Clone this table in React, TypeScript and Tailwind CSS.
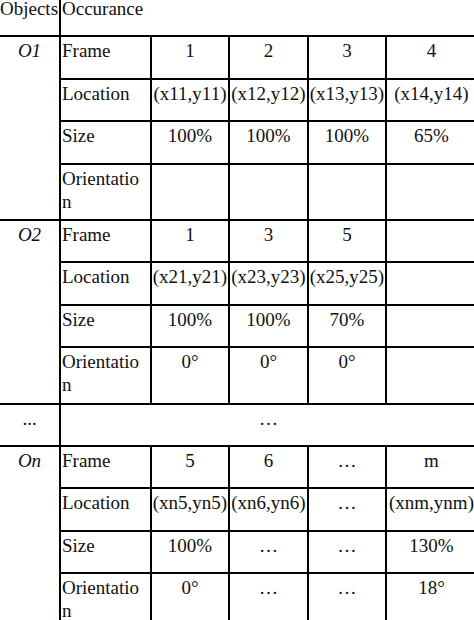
const blocks = [
  {
    name: "O1",
    rows: [
      ["Frame", "1", "2", "3", "4"],
      ["Location", "(x11,y11)", "(x12,y12)", "(x13,y13)", "(x14,y14)"],
      ["Size", "100%", "100%", "100%", "65%"],
      ["Orientation", "", "", "", ""],
    ],
  },
  {
    name: "O2",
    rows: [
      ["Frame", "1", "3", "5", ""],
      ["Location", "(x21,y21)", "(x23,y23)", "(x25,y25)", ""],
      ["Size", "100%", "100%", "70%", ""],
      ["Orientation", "0°", "0°", "0°", ""],
    ],
  },
];

const last = {
  name: "On",
  rows: [
    ["Frame", "5", "6", "…", "m"],
    ["Location", "(xn5,yn5)", "(xn6,yn6)", "…", "(xnm,ynm)"],
    ["Size", "100%", "…", "…", "130%"],
    ["Orientation", "0°", "…", "…", "18°"],
  ],
};

function Label({ text }: { text: string }) {
  // the long label wraps in the source table
  if (text === "Orientation") {
    return (
      <div className="bg-white pl-[1px] pt-[2px]">
        Orientatio
        <br />n
      </div>
    );
  }
  return <div className="bg-white pl-[1px] pt-[2px]">{text}</div>;
}

function Block({ name, rows }: { name: string; rows: string[][] }) {
  return (
    <>
      <div className="row-span-4 bg-white pt-[2px] text-center italic">{name}</div>
      {rows.map((row, i) => (
        <Row key={i} row={row} />
      ))}
    </>
  );
}

function Row({ row }: { row: string[] }) {
  const [label, ...values] = row;
  return (
    <>
      <Label text={label} />
      {values.map((v, j) => (
        <div key={j} className="bg-white pt-[2px] text-center whitespace-nowrap">
          {v}
        </div>
      ))}
    </>
  );
}

export default function App() {
  return (
    <div className="w-[474px] h-[620px] overflow-hidden bg-white">
      <div className="-mt-[8px] grid w-max grid-cols-[59px_89px_76px_77px_76px_89px] grid-rows-[43px_41px_40px_41px_54px_40px_41px_40px_55px_40px_40px_41px_40px_55px] gap-[2px] bg-black font-['Liberation_Serif','Times_New_Roman',serif] text-[19px] leading-[23px] text-[#111]">
        <div className="bg-white pt-[5px] whitespace-nowrap">Objects</div>
        <div className="col-span-5 bg-white pl-[1px] pt-[5px]">Occurance</div>

        {blocks.map((b) => (
          <Block key={b.name} name={b.name} rows={b.rows} />
        ))}

        <div className="bg-white pt-[2px] text-center">...</div>
        <div className="col-span-5 bg-white pt-[2px] text-center">…</div>

        <Block name={last.name} rows={last.rows} />
      </div>
    </div>
  );
}
